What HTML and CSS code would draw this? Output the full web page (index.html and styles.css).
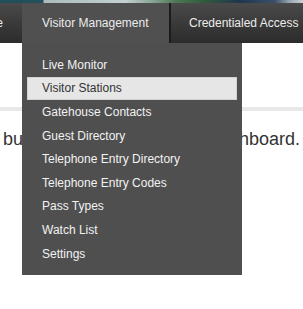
FILE: index.html
```html
<!DOCTYPE html>
<html>
<head>
<meta charset="utf-8">
<link rel="stylesheet" href="styles.css">
</head>
<body>
<div class="banner"></div>
<nav class="nav">
  <div class="nav-item nav-first"><span>Home</span></div>
  <div class="nav-item nav-active">
    <span>Visitor Management</span>
    <ul class="dropdown">
      <li class="dd-item">Live Monitor</li>
      <li class="dd-item dd-hover">Visitor Stations</li>
      <li class="dd-item">Gatehouse Contacts</li>
      <li class="dd-item">Guest Directory</li>
      <li class="dd-item">Telephone Entry Directory</li>
      <li class="dd-item">Telephone Entry Codes</li>
      <li class="dd-item">Pass Types</li>
      <li class="dd-item">Watch List</li>
      <li class="dd-item">Settings</li>
    </ul>
  </div>
  <div class="nav-sep"></div>
  <div class="nav-item nav-next"><span>Credentialed Access</span></div>
</nav>
<main class="content">
  <div class="header-space"></div>
  <p class="intro">
    <span class="intro-left"><a class="link">the</a> buttons</span>
    <span class="intro-right">on the <span class="red">Das</span>hboard.</span>
  </p>
</main>
</body>
</html>
```
FILE: styles.css
```css
html, body {
  margin: 0;
  padding: 0;
  background: #ffffff;
  overflow: hidden;
}
body {
  font-family: "Liberation Sans", Arial, sans-serif;
  width: 303px;
  height: 309px;
}
.banner {
  height: 3px;
  background: linear-gradient(90deg, #22505a 0, #22505a 43px, #a9bcbc 44px, #c3d0cf 125px, #8fa89a 150px, #4f7a56 175px, #2f5a3c 205px, #1f3550 240px, #3c5068 275px, #9aa8b4 290px, #c9d0d6 303px);
}
.nav {
  display: flex;
  height: 40px;
  background: linear-gradient(180deg, #4a4a4a 0%, #3a3a3a 50%, #2c2c2c 100%);
  color: #ececec;
  font-size: 12px;
  position: relative;
  z-index: 2;
}
.nav-item {
  display: flex;
  align-items: center;
  white-space: nowrap;
}
.nav-first {
  width: 3px;
  padding-right: 19px;
  justify-content: flex-end;
}
.nav-active {
  position: relative;
  width: 147px;
  box-sizing: border-box;
  padding-left: 20px;
  background: #505050;
}
.nav-sep {
  width: 2px;
  background: #1b1b1b;
}
.nav-next {
  padding-left: 18px;
}
.dropdown {
  position: absolute;
  top: 100%;
  left: 0;
  width: 220px;
  margin: 0;
  padding: 10px 0 10px;
  list-style: none;
  background: #4f4f4f;
  box-sizing: border-box;
}
.dd-item {
  height: 23.6px;
  display: flex;
  align-items: center;
  padding-left: 20px;
  color: #f2f2f2;
  font-size: 12px;
}
.dd-hover {
  margin: 0 5px;
  padding-left: 14px;
  background: #e6e6e6;
  border: 1px solid #d2d2d2;
  box-sizing: border-box;
  color: #333333;
}
.content {
  display: flex;
  flex-direction: column;
}
.header-space {
  height: 64px;
  border-bottom: 4px solid #e8e8e8;
}
.intro {
  display: flex;
  justify-content: space-between;
  margin: 18px 3px 0 -27px;
  font-size: 18px;
  color: #333333;
  white-space: nowrap;
}
.link {
  color: #3a8fd0;
}
.red {
  color: #a33a3a;
}
```
